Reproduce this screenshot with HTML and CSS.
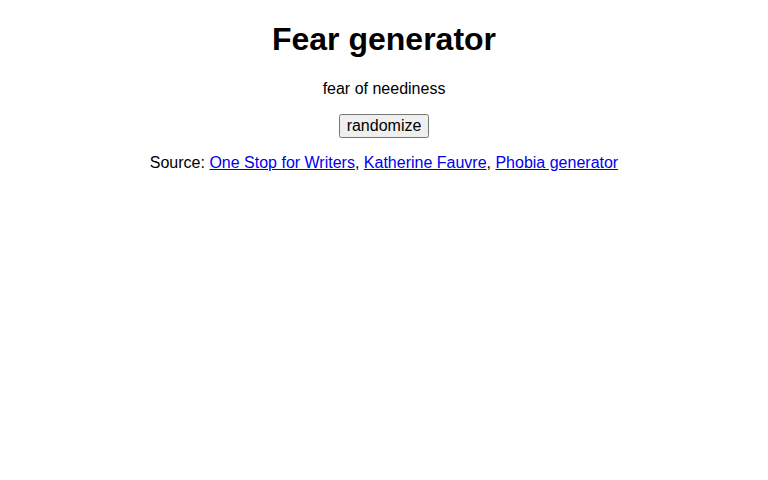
FILE: index.html
```html
<!DOCTYPE html>
<html lang="en">
<head>
  <meta charset="UTF-8" />
  <title>Fear generator</title>
  <link rel="stylesheet" href="styles.css">
</head>
<body>
  <h1>Fear generator</h1>
  <p class="fear" id="fear">fear of neediness</p>
  <p><button class="randomize" type="button">randomize</button></p>
  <p class="source">Source: <a href="#">One Stop for Writers</a>, <a href="#">Katherine Fauvre</a>, <a href="#">Phobia generator</a></p>
</body>
</html>
```

FILE: styles.css
```css
body {
  margin: 0 8px;
  font-family: "Liberation Sans", Arial, sans-serif;
  font-size: 16px;
  text-align: center;
  color: #000;
}

h1 {
  font-size: 32px;
}

.randomize {
  font-family: "Liberation Sans", Arial, sans-serif;
  font-size: 16px;
}

.source a {
  color: #0000ee;
}
```
